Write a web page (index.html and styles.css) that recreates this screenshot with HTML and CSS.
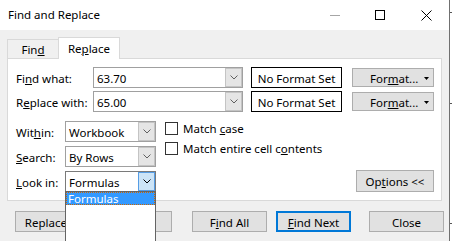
FILE: index.html
```html
<!DOCTYPE html>
<html lang="en">
<head>
<meta charset="utf-8">
<title>Find and Replace</title>
<link rel="stylesheet" href="styles.css">
</head>
<body>
<div class="screen">
  <div class="dialog">
    <div class="titlebar">
      <span class="title">Find and Replace</span>
      <div class="caption">
        <svg class="cap-min" width="10" height="10" viewBox="0 0 10 10"><path d="M0 5.5H10" stroke="#a6a6a6" stroke-width="1"/></svg>
        <svg class="cap-max" width="10" height="10" viewBox="0 0 10 10"><rect x="0.5" y="0.5" width="9" height="9" fill="none" stroke="#000" stroke-width="1"/></svg>
        <svg class="cap-close" width="11" height="11" viewBox="0 0 11 11"><path d="M0.5 0.5L10.5 10.5M10.5 0.5L0.5 10.5" stroke="#000" stroke-width="1"/></svg>
      </div>
    </div>
    <div class="client">
      <div class="tabs">
        <div class="tab tab-find">Fin<u>d</u></div>
        <div class="tab tab-replace">Re<u>p</u>lace</div>
      </div>
      <div class="panel">
        <div class="frow">
          <span class="flabel">Fi<u>n</u>d what:</span>
          <div class="combo combo-wide">
            <span class="val">63.70</span>
            <span class="arrow"><svg width="8" height="5" viewBox="0 0 8 5"><path d="M0.5 0.5L4 4L7.5 0.5" fill="none" stroke="#606060" stroke-width="1"/></svg></span>
          </div>
          <div class="nofmt">No Format Set</div>
          <div class="btn btn-fmt"><span>For<u>m</u>at...</span><svg class="tri" width="5" height="3" viewBox="0 0 5 3"><path d="M0 0H5L2.5 3Z" fill="#000"/></svg></div>
        </div>
        <div class="frow">
          <span class="flabel">R<u>e</u>place with:</span>
          <div class="combo combo-wide">
            <span class="val">65.00</span>
            <span class="arrow"><svg width="8" height="5" viewBox="0 0 8 5"><path d="M0.5 0.5L4 4L7.5 0.5" fill="none" stroke="#606060" stroke-width="1"/></svg></span>
          </div>
          <div class="nofmt">No Format Set</div>
          <div class="btn btn-fmt"><span>For<u>m</u>at...</span><svg class="tri" width="5" height="3" viewBox="0 0 5 3"><path d="M0 0H5L2.5 3Z" fill="#000"/></svg></div>
        </div>
        <div class="lower">
          <div class="selects">
            <div class="srow">
              <span class="slabel">Wit<u>h</u>in:</span>
              <div class="combo combo-small">
                <span class="val">Workbook</span>
                <span class="arrow"><svg width="8" height="5" viewBox="0 0 8 5"><path d="M0.5 0.5L4 4L7.5 0.5" fill="none" stroke="#606060" stroke-width="1"/></svg></span>
              </div>
            </div>
            <div class="srow">
              <span class="slabel"><u>S</u>earch:</span>
              <div class="combo combo-small">
                <span class="val">By Rows</span>
                <span class="arrow"><svg width="8" height="5" viewBox="0 0 8 5"><path d="M0.5 0.5L4 4L7.5 0.5" fill="none" stroke="#606060" stroke-width="1"/></svg></span>
              </div>
            </div>
            <div class="srow">
              <span class="slabel"><u>L</u>ook in:</span>
              <div class="combo combo-small combo-open">
                <span class="val">Formulas</span>
                <span class="arrow arrow-hot"><svg width="8" height="5" viewBox="0 0 8 5"><path d="M0.5 0.5L4 4L7.5 0.5" fill="none" stroke="#000" stroke-width="1"/></svg></span>
                <div class="droplist">
                  <div class="dropitem">Formulas</div>
                </div>
              </div>
            </div>
          </div>
          <div class="checks">
            <div class="crow"><span class="cbox"></span><span>Match <u>c</u>ase</span></div>
            <div class="crow"><span class="cbox"></span><span>Match entire cell c<u>o</u>ntents</span></div>
          </div>
          <div class="btn btn-options">Op<u>t</u>ions &lt;&lt;</div>
        </div>
      </div>
      <div class="actions">
        <div class="btn act act-replall">Replace <u>A</u>ll</div>
        <div class="btn act act-repl"><u>R</u>eplace</div>
        <div class="btn act act-findall">F<u>i</u>nd All</div>
        <div class="btn act act-findnext act-default"><u>F</u>ind Next</div>
        <div class="btn act act-close">Close</div>
      </div>
    </div>
  </div>
  <div class="edge"></div>
</div>
</body>
</html>
```
FILE: styles.css
```css
* { box-sizing: border-box; }
html, body { margin: 0; padding: 0; }
body {
  background: #fff;
  font-family: "Noto Sans", "Open Sans", "Liberation Sans", sans-serif;
  font-size: 11.5px;
  color: #000;
}
u { text-decoration: underline; text-underline-offset: 1px; text-decoration-thickness: 1px; }

.screen {
  display: flex;
  width: 452px;
  height: 241px;
  overflow: hidden;
}
.dialog {
  width: 450px;
  height: 241px;
  border-right: 1px solid #707070;
  display: flex;
  flex-direction: column;
}
.edge {
  width: 2px;
  height: 241px;
  background:
    linear-gradient(#555, #555) 0 12px / 2px 1px no-repeat,
    linear-gradient(#555, #555) 0 103px / 2px 1px no-repeat,
    linear-gradient(#555, #555) 0 223px / 2px 1px no-repeat,
    #fff;
}

/* title bar */
.titlebar {
  height: 30px;
  flex: none;
  display: flex;
  align-items: center;
  background: #fff;
}
.title { padding-left: 8px; font-size: 11.5px; line-height: 16px; }
.caption {
  margin-left: auto;
  display: flex;
  align-items: center;
  padding-right: 17px;
}
.caption svg { display: block; }
.cap-min { margin-right: 35px; }
.cap-max { margin-right: 36px; }

/* client */
.client {
  flex: 1;
  background: #f0f0f0;
  padding: 7px 0 0 7px;
  display: flex;
  flex-direction: column;
}
.tabs {
  display: flex;
  align-items: flex-end;
  height: 21px;
  position: relative;
  z-index: 2;
}
.tab {
  border: 1px solid #d9d9d9;
  border-bottom: none;
  text-align: center;
  line-height: 16px;
}
.tab-find {
  width: 51px;
  height: 19px;
  border-right: none;
  padding-top: 2px;
}
.tab-replace {
  width: 62px;
  height: 22px;
  margin-bottom: -1px;
  background: #fff;
  padding-top: 3px;
}

.panel {
  width: 435px;
  background: #fff;
  border: 1px solid #d9d9d9;
  padding: 8px 7px 8px 8px;
  position: relative;
  z-index: 1;
}

.frow {
  display: flex;
  align-items: center;
  height: 21px;
}
.frow + .frow { margin-top: 3px; }
.flabel { width: 77px; padding-top: 1px; white-space: nowrap; }

.combo {
  display: flex;
  align-items: stretch;
  background: #fff;
  border: 1px solid #a0a0a0;
  position: relative;
}
.combo .val {
  flex: 1;
  display: flex;
  align-items: center;
  padding-left: 3px;
  padding-top: 1px;
  white-space: nowrap;
}
.combo .arrow {
  width: 17px;
  display: flex;
  align-items: center;
  justify-content: center;
  background: #e5e5e5;
  border: 1px solid #c4c4c4;
}
.combo-wide { width: 150px; height: 21px; }
.combo-small { width: 91px; height: 21px; }
.combo-open { border-color: #7a7a7a; }
.arrow.arrow-hot {
  background: #cce4f7;
  border-color: #569de5;
}

.nofmt {
  width: 91px;
  height: 21px;
  margin-left: 8px;
  border: 1px solid #000;
  display: flex;
  align-items: center;
  justify-content: center;
  padding-top: 1px;
}

.btn {
  background: #e1e1e1;
  border: 1px solid #adadad;
  display: flex;
  align-items: center;
  justify-content: center;
  padding-top: 1px;
  white-space: nowrap;
}
.btn-fmt {
  width: 82px;
  height: 19px;
  margin-left: 10px;
  justify-content: flex-start;
  padding-left: 17px;
}
.btn-fmt .tri { margin-left: auto; margin-right: 4px; display: block; }

.lower {
  display: flex;
  margin-top: 9px;
}
.selects { display: flex; flex-direction: column; gap: 4px; }
.srow { display: flex; align-items: center; height: 21px; }
.slabel { width: 49px; padding-top: 1px; }

.checks {
  margin-left: 9px;
  padding-top: 1px;
  display: flex;
  flex-direction: column;
  gap: 7px;
}
.crow {
  display: flex;
  align-items: center;
  height: 13px;
  line-height: 13px;
}
.cbox {
  width: 13px;
  height: 13px;
  border: 1px solid #333;
  background: #fff;
  margin-right: 5px;
}

.btn-options {
  margin-left: auto;
  align-self: flex-end;
  width: 78px;
  height: 22px;
}

.droplist {
  position: absolute;
  top: 100%;
  left: -1px;
  width: 91px;
  height: 60px;
  background: #fff;
  border: 1px solid #646464;
  z-index: 10;
}
.dropitem {
  height: 13px;
  line-height: 11px;
  background: #3399ff;
  color: #fff;
  border: 1px dotted #cc6600;
  padding-left: 1px;
}

.actions {
  display: flex;
  margin-top: 10px;
}
.act { width: 75px; height: 21px; }
.act-replall { margin-left: 8px; }
.act-repl { margin-left: 7px; }
.act-findall { margin-left: 20px; }
.act-findnext { margin-left: 9px; }
.act-close { margin-left: 18px; }
.act-default { border: 2px solid #0078d7; }
```
